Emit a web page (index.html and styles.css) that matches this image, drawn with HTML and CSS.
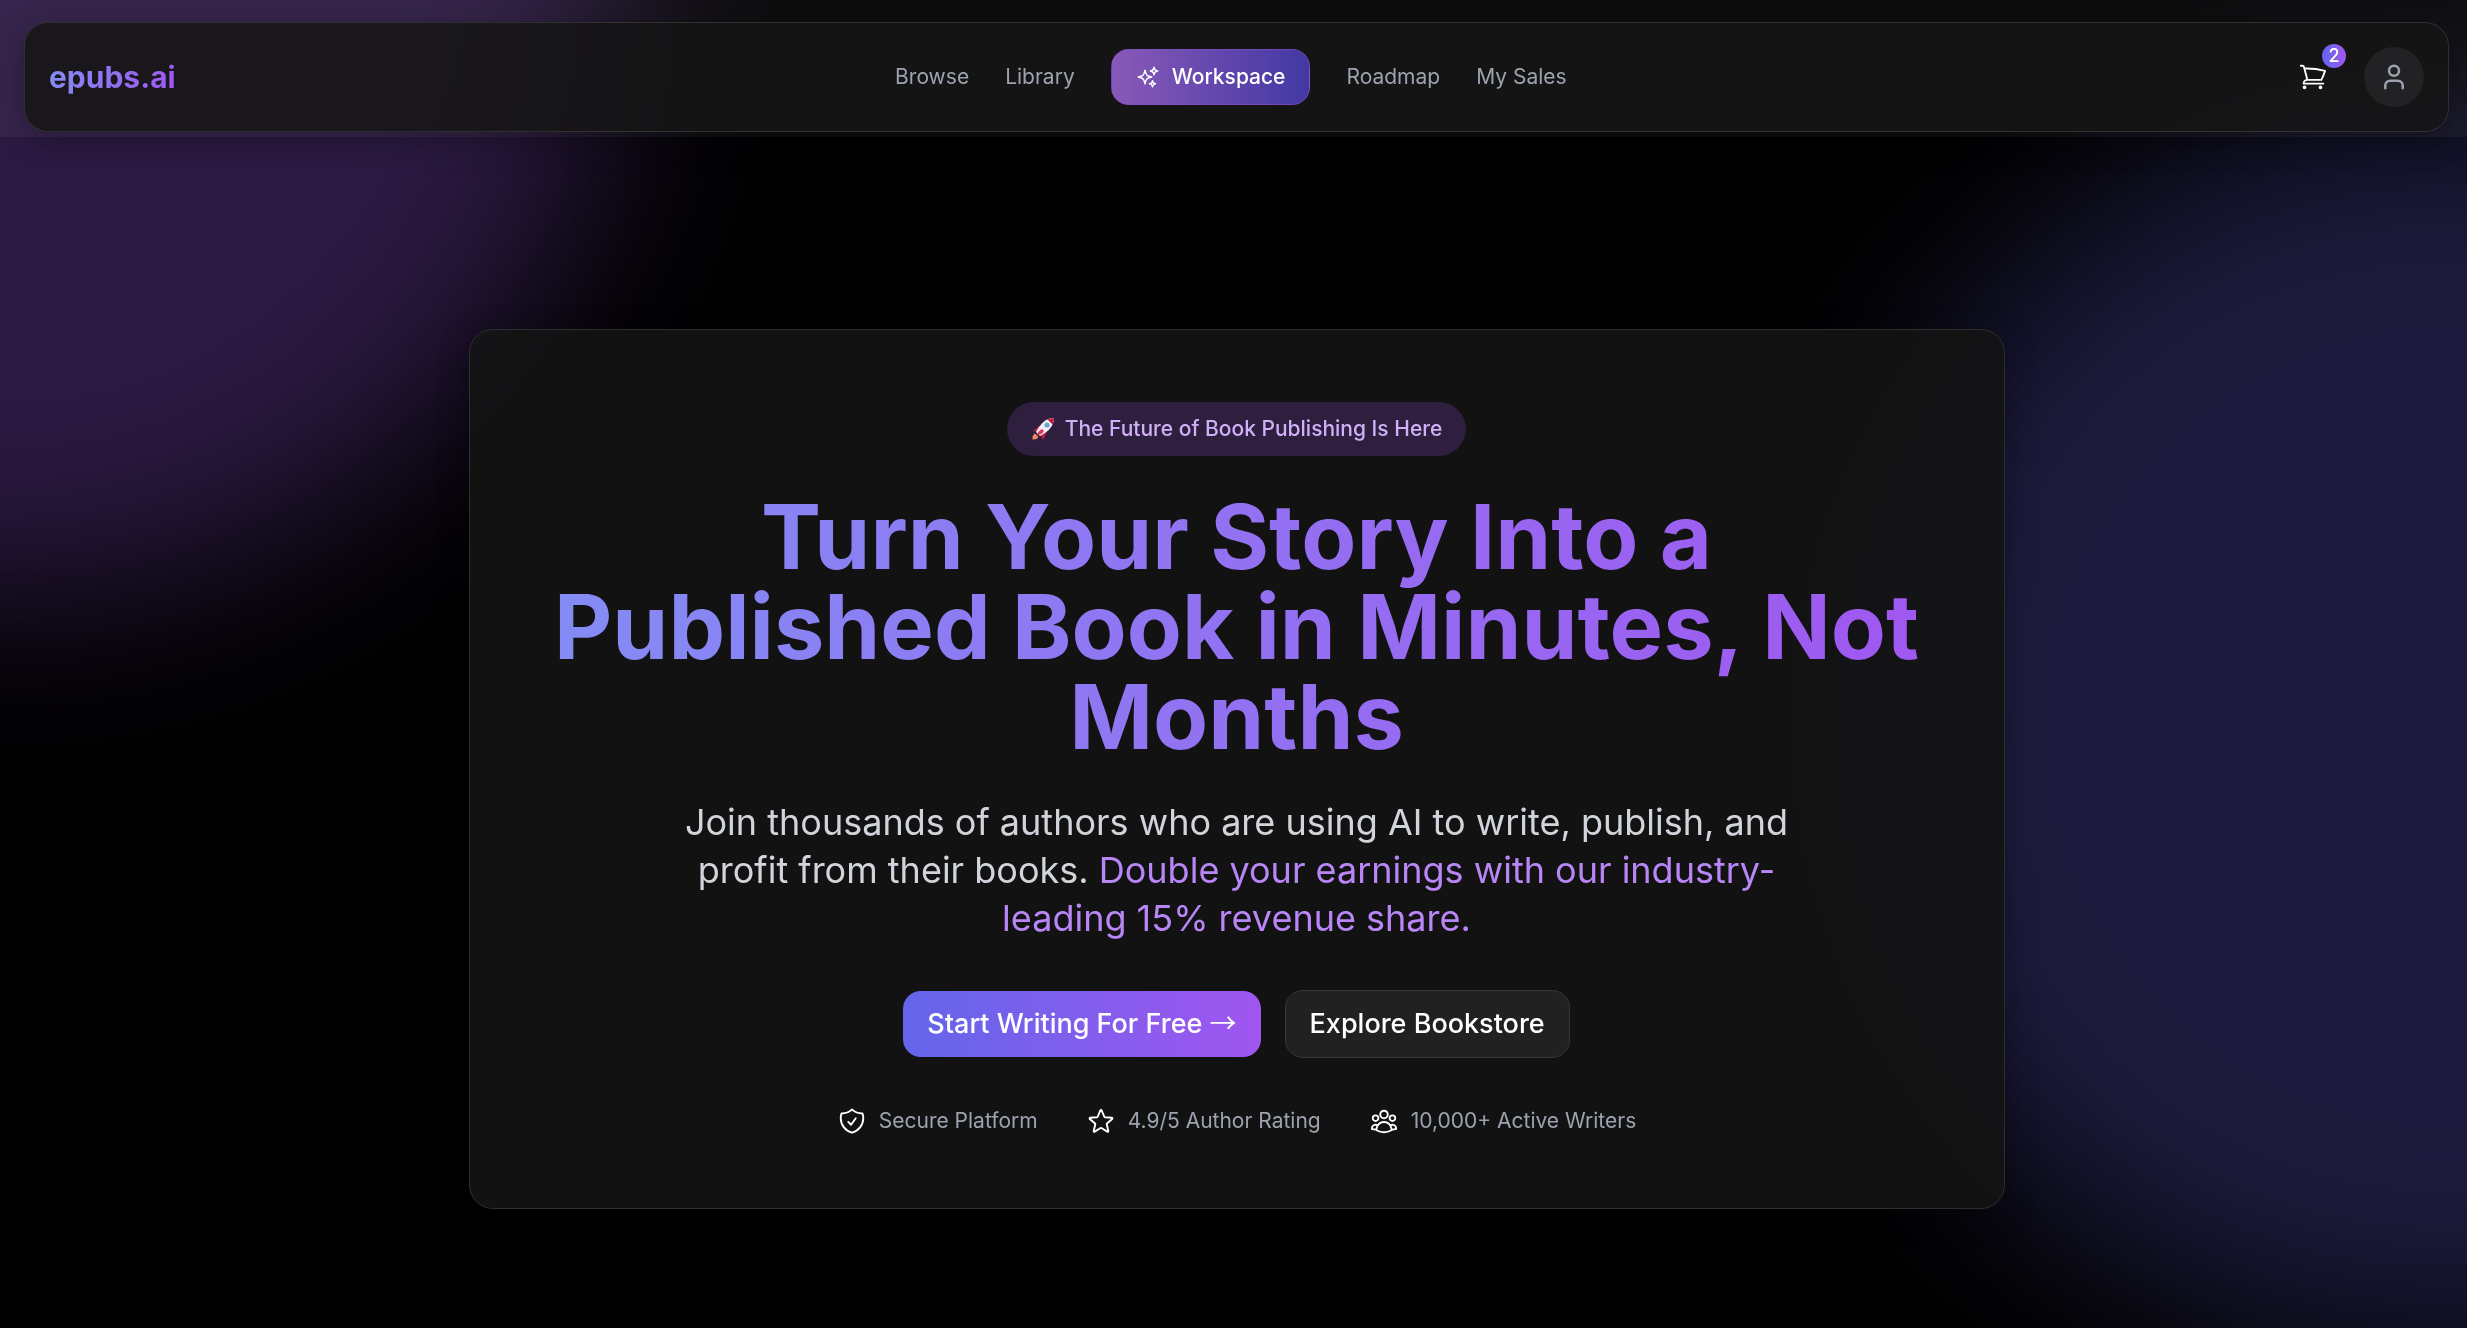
FILE: index.html
```html
<!DOCTYPE html>
<html lang="en">
<head>
<meta charset="utf-8">
<meta name="viewport" content="width=device-width, initial-scale=1">
<title>epubs.ai</title>
<link rel="stylesheet" href="styles.css">
</head>
<body>
<div class="glow glow-purple"></div>
<div class="glow glow-indigo"></div>

<header class="site-header">
  <div class="bar">
    <a class="logo" href="#">epubs.ai</a>
    <nav class="nav" aria-label="Main">
      <a href="#">Browse</a>
      <a href="#">Library</a>
      <a class="workspace" href="#">
        <svg class="icon" viewBox="0 0 24 24" aria-hidden="true"><path d="M9.8 15.9 9 18.75l-.8-2.85a4.5 4.5 0 0 0-3.1-3.1L2.25 12l2.85-.8a4.5 4.5 0 0 0 3.1-3.1L9 5.25l.8 2.85a4.5 4.5 0 0 0 3.1 3.1l2.85.8-2.85.8a4.5 4.5 0 0 0-3.1 3.1ZM18.26 8.7 18 9.75l-.26-1.05a3.38 3.38 0 0 0-2.45-2.44L14.25 6l1.04-.26a3.38 3.38 0 0 0 2.45-2.45L18 2.25l.26 1.04a3.38 3.38 0 0 0 2.45 2.45L21.75 6l-1.04.26a3.38 3.38 0 0 0-2.45 2.44ZM16.9 20.57l-.4 1.18-.4-1.18a2.25 2.25 0 0 0-1.42-1.42l-1.18-.4 1.18-.4a2.25 2.25 0 0 0 1.42-1.42l.4-1.18.4 1.18a2.25 2.25 0 0 0 1.42 1.42l1.18.4-1.18.4a2.25 2.25 0 0 0-1.42 1.42Z"/></svg>
        Workspace
      </a>
      <a href="#">Roadmap</a>
      <a href="#">My Sales</a>
    </nav>
    <div class="actions">
      <button class="cart" type="button" aria-label="Cart, 2 items">
        <svg class="cart-icon" viewBox="0 0 24 24" aria-hidden="true"><path d="M2.25 3h1.386c.51 0 .955.343 1.087.835l.383 1.437M7.5 14.25a3 3 0 0 0-3 3h15.75m-12.75-3h11.218c1.121-2.3 2.1-4.684 2.924-7.138a60.114 60.114 0 0 0-16.536-1.84M7.5 14.25 5.106 5.272M6 20.25a.75.75 0 1 1-1.5 0 .75.75 0 0 1 1.5 0Zm12.75 0a.75.75 0 1 1-1.5 0 .75.75 0 0 1 1.5 0Z"/></svg>
        <span class="count">2</span>
      </button>
      <button class="profile" type="button" aria-label="Account">
        <svg class="profile-icon" viewBox="0 0 24 24" aria-hidden="true"><circle cx="12" cy="7" r="4"/><path d="M19 21v-2a4 4 0 0 0-4-4H9a4 4 0 0 0-4 4v2"/></svg>
      </button>
    </div>
  </div>
</header>

<main class="main">
  <section class="hero">
    <p class="pill">
      <svg class="rocket" viewBox="0 0 24 24" aria-hidden="true"><path fill="#f08a5c" d="M1.500 22.500q-.5-4.500 2.500-6l3.500 3.500q-1.500 3-6 2.500Z"/><path fill="#be1941" d="M8 9 2 14l5 1 2 2 3 6 4-8Z"/><path fill="#f2eef2" d="M23 1q-9 0-15 9l-3 5 4 4 5-3q9-6 9-15Z"/><path fill="#be1941" d="M23 1q-3 0-6.500 1.500l5 5Q23 4 23 1Z"/><path fill="#e0385a" d="M11 12q-4 2-5 6 5 0 7-4Z"/><circle cx="16" cy="8" r="2.600" fill="#6ba5d8"/></svg>
      The Future of Book Publishing Is Here
    </p>
    <h1 class="title">Turn Your Story Into a Published Book in Minutes, Not Months</h1>
    <p class="lead">Join thousands of authors who are using AI to write, publish, and profit from their books. <span class="accent">Double your earnings with our industry-leading 15% revenue share.</span></p>
    <div class="cta">
      <button class="btn primary" type="button">Start Writing For Free <span class="arrow">→</span></button>
      <button class="btn secondary" type="button">Explore Bookstore</button>
    </div>
    <ul class="trust">
      <li><svg class="trust-icon" viewBox="0 0 24 24" aria-hidden="true"><path d="M9 12.75 11.25 15 15 9.75m-3-7.036A11.959 11.959 0 0 1 3.598 6 11.99 11.99 0 0 0 3 9.749c0 5.592 3.824 10.29 9 11.623 5.176-1.332 9-6.03 9-11.622 0-1.31-.21-2.571-.598-3.751h-.152c-3.196 0-6.1-1.248-8.25-3.285Z"/></svg>Secure Platform</li>
      <li><svg class="trust-icon" viewBox="0 0 24 24" aria-hidden="true"><path d="M11.48 3.499a.562.562 0 0 1 1.04 0l2.125 5.111a.563.563 0 0 0 .475.345l5.518.442c.499.04.701.663.321.988l-4.204 3.602a.563.563 0 0 0-.182.557l1.285 5.385a.562.562 0 0 1-.84.61l-4.725-2.885a.562.562 0 0 0-.586 0L6.982 20.54a.562.562 0 0 1-.84-.61l1.285-5.386a.562.562 0 0 0-.182-.557l-4.204-3.602a.562.562 0 0 1 .321-.988l5.518-.442a.563.563 0 0 0 .475-.345L11.48 3.5Z"/></svg>4.9/5 Author Rating</li>
      <li><svg class="trust-icon" viewBox="0 0 24 24" aria-hidden="true"><path d="M18 18.72a9.094 9.094 0 0 0 3.741-.479 3 3 0 0 0-4.682-2.72m.94 3.198.001.031c0 .225-.012.447-.037.666A11.944 11.944 0 0 1 12 21c-2.17 0-4.207-.576-5.963-1.584A6.062 6.062 0 0 1 6 18.719m12 0a5.971 5.971 0 0 0-.941-3.197m0 0A5.995 5.995 0 0 0 12 12.75a5.995 5.995 0 0 0-5.058 2.772m0 0a3 3 0 0 0-4.681 2.72 8.986 8.986 0 0 0 3.74.477m.94-3.197a5.971 5.971 0 0 0-.94 3.197M15 6.75a3 3 0 1 1-6 0 3 3 0 0 1 6 0Zm6 3a2.25 2.25 0 1 1-4.5 0 2.25 2.25 0 0 1 4.5 0Zm-13.5 0a2.25 2.25 0 1 1-4.5 0 2.25 2.25 0 0 1 4.5 0Z"/></svg>10,000+ Active Writers</li>
    </ul>
  </section>
</main>
</body>
</html>
```

FILE: styles.css
```css
* { box-sizing: border-box; }

body {
  margin: 0;
  min-height: 100vh;
  background: #000;
  color: #fff;
  font-family: Inter, "Liberation Sans", sans-serif;
  font-size: 21px;
  line-height: 30px;
  position: relative;
  overflow-x: hidden;
}

a { color: inherit; text-decoration: none; }

button {
  font: inherit;
  color: inherit;
  border: 0;
  padding: 0;
  cursor: pointer;
}

svg { fill: none; stroke: currentColor; stroke-linecap: round; stroke-linejoin: round; flex: none; }

/* Ambient background lights */
.glow { position: fixed; border-radius: 50%; filter: blur(96px); z-index: -1; }
.glow-purple { width: 50vw; height: 50vw; left: -25vw; top: -26vw; background: #2c1a43; }
.glow-indigo { width: 50vw; height: 50vw; right: -24vw; top: 110px; background: #1c1b3d; }

.site-header { padding: 22px 18px 5px 24px; background: rgba(255, 255, 255, 0.05); }

.bar {
  display: flex;
  justify-content: space-between;
  align-items: center;
  height: 110px;
  padding: 0 24px;
  border: 1px solid #303030;
  border-radius: 24px;
  background: rgba(22, 22, 22, 0.88);
  box-shadow: 0 8px 32px rgba(0, 0, 0, 0.3);
}

.logo {
  font-size: 30px;
  line-height: 42px;
  font-weight: 700;
}

.logo, .title {
  background: linear-gradient(to right, #848cf4, #a057f0);
  -webkit-background-clip: text;
  background-clip: text;
  color: transparent;
}

.nav { display: flex; align-items: center; gap: 36px; color: #9ca3af; }

.workspace {
  display: flex;
  align-items: center;
  gap: 12px;
  height: 56px;
  padding: 0 24px;
  border: 1px solid rgba(130, 80, 200, 0.6);
  border-radius: 18px;
  background: linear-gradient(to right, #8959b9, #4338a3);
  color: #fff;
  font-weight: 500;
}

.icon { width: 24px; height: 24px; stroke-width: 1.5; }

.actions { display: flex; align-items: center; gap: 24px; }

.cart { position: relative; width: 54px; height: 54px; display: grid; place-items: center; background: none; }
.cart-icon { width: 30px; height: 30px; stroke-width: 1.5; }

.count {
  position: absolute;
  top: -6px;
  right: -6px;
  width: 24px;
  height: 24px;
  border-radius: 50%;
  background: linear-gradient(to right, #6366f1, #a057f0);
  font-size: 18px;
  line-height: 24px;
  font-weight: 500;
  text-align: center;
}

.profile { width: 60px; height: 60px; border-radius: 50%; display: grid; place-items: center; background: #222224; color: #9ca3af; }
.profile-icon { width: 30px; height: 30px; stroke-width: 2; }

.main { padding: 192px 18px 120px 24px; }

.hero {
  max-width: 1536px;
  margin: 0 auto;
  padding: 72px;
  display: flex;
  flex-direction: column;
  align-items: center;
  border: 1px solid #2e2e2e;
  border-radius: 24px;
  background: rgba(20, 20, 20, 0.9);
  box-shadow: 0 8px 32px rgba(0, 0, 0, 0.3);
  text-align: center;
}

.pill {
  display: flex;
  align-items: center;
  gap: 10px;
  margin: 0 0 36px;
  padding: 12px 24px;
  border-radius: 27px;
  background: #2e1f3e;
  color: #d0b0f8;
  font-weight: 500;
}
.rocket { width: 24px; height: 24px; stroke: none; }

.title { margin: 0 0 36px; font-size: 90px; line-height: 90px; font-weight: 700; }

.lead { max-width: 1152px; margin: 0 0 48px; font-size: 36px; line-height: 48px; color: #d1d5db; }
.accent { color: #b886f6; }

.cta { display: flex; align-items: center; gap: 24px; }
.btn { height: 66px; padding: 0 24px; border-radius: 18px; font-size: 27px; line-height: 36px; font-weight: 500; }
.primary { background: linear-gradient(to right, #6366ea, #a056f0); }
.secondary { height: 68px; border: 1px solid #373737; background: #212121; }
.arrow { font-family: "Noto Sans CJK JP", sans-serif; font-weight: 400; line-height: 1; }

.trust { display: flex; gap: 48px; margin: 48px 0 0; padding: 0; list-style: none; color: #9ca3af; }
.trust li { display: flex; align-items: center; gap: 12px; }
.trust-icon { width: 30px; height: 30px; color: #fff; stroke-width: 1.5; }
```
